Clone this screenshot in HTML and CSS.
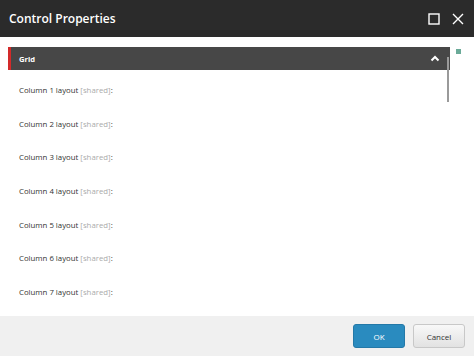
FILE: index.html
```html
<!DOCTYPE html>
<html>
<head>
<meta charset="utf-8">
<link rel="stylesheet" href="styles.css">
</head>
<body>
<div class="dialog">
  <div class="titlebar">
    <div class="title">Control Properties</div>
    <div class="tools">
      <svg class="ico" width="12" height="12" viewBox="0 0 12 12"><rect x="1" y="1" width="10" height="10" fill="none" stroke="#fff" stroke-width="1.4"/></svg>
      <svg class="ico" width="12" height="12" viewBox="0 0 12 12"><path d="M1 1 L11 11 M11 1 L1 11" stroke="#fff" stroke-width="1.4" fill="none"/></svg>
    </div>
  </div>
  <div class="body">
    <div class="content">
      <div class="section">
        <div class="section-head">
          <span class="section-title">Grid</span>
          <svg class="chev" width="10" height="7" viewBox="0 0 10 7"><path d="M1.5 5.5 L5 2 L8.5 5.5" stroke="#fff" stroke-width="2" fill="none"/></svg>
        </div>
        <div class="scrollline"></div>
        <div class="rows">
          <div class="row">Column 1 layout <span class="shared">[shared]</span>:</div>
          <div class="row">Column 2 layout <span class="shared">[shared]</span>:</div>
          <div class="row">Column 3 layout <span class="shared">[shared]</span>:</div>
          <div class="row">Column 4 layout <span class="shared">[shared]</span>:</div>
          <div class="row">Column 5 layout <span class="shared">[shared]</span>:</div>
          <div class="row">Column 6 layout <span class="shared">[shared]</span>:</div>
          <div class="row">Column 7 layout <span class="shared">[shared]</span>:</div>
        </div>
      </div>
      <div class="marker"></div>
    </div>
  </div>
  <div class="footer">
    <button class="btn ok">OK</button>
    <button class="btn cancel">Cancel</button>
  </div>
</div>
</body>
</html>
```

FILE: styles.css
```css
* { box-sizing: border-box; }
html, body { margin: 0; padding: 0; }
body {
  width: 474px;
  height: 356px;
  overflow: hidden;
  font-family: "Open Sans", "Noto Sans", sans-serif;
  background: #fff;
}
.dialog {
  display: flex;
  flex-direction: column;
  height: 356px;
}
.titlebar {
  height: 37px;
  background: #2b2b2b;
  display: flex;
  align-items: center;
  justify-content: space-between;
  padding: 0 10px 0 9px;
  flex-shrink: 0;
}
.title {
  color: #fff;
  font-size: 12px;
  font-weight: 600;
  margin-top: -1px;
}
.tools {
  display: flex;
  gap: 12px;
  align-items: center;
}
.ico { display: block; }
.body {
  flex: 1;
  overflow: hidden;
}
.content {
  display: flex;
  padding: 10px 0 0 8px;
}
.section {
  width: 442px;
  position: relative;
}
.section-head {
  height: 23px;
  background: #474747;
  border-left: 3px solid #d32a2a;
  display: flex;
  align-items: center;
  justify-content: space-between;
  padding: 0 10px 0 8px;
}
.section-title {
  color: #fff;
  font-size: 7.6px;
  font-weight: 700;
}
.chev { display: block; }
.scrollline {
  position: absolute;
  left: 439px;
  top: 10px;
  width: 2px;
  height: 45px;
  background: #9a9a9a;
}
.rows {
  padding: 12px 0 0 11px;
}
.row {
  height: 33.7px;
  font-size: 7.8px;
  color: #333;
  line-height: 16px;
}
.shared { color: #aaa; }
.marker {
  width: 5px;
  height: 5px;
  background: #6aaa98;
  margin: 2px 0 0 6px;
}
.footer {
  height: 40px;
  background: #f0f0f0;
  display: flex;
  justify-content: flex-end;
  align-items: center;
  gap: 8px;
  padding: 0 9px 0 0;
  flex-shrink: 0;
}
.btn {
  width: 52px;
  height: 24px;
  border-radius: 3px;
  font-family: "Open Sans", "Noto Sans", sans-serif;
  font-size: 8px;
  padding: 0;
}
.ok {
  background: #2a8bbf;
  border: 1px solid #2479a8;
  color: #fff;
}
.cancel {
  background: linear-gradient(#f8f8f8, #e2e2e2);
  border: 1px solid #c8c8c8;
  color: #333;
}
```
